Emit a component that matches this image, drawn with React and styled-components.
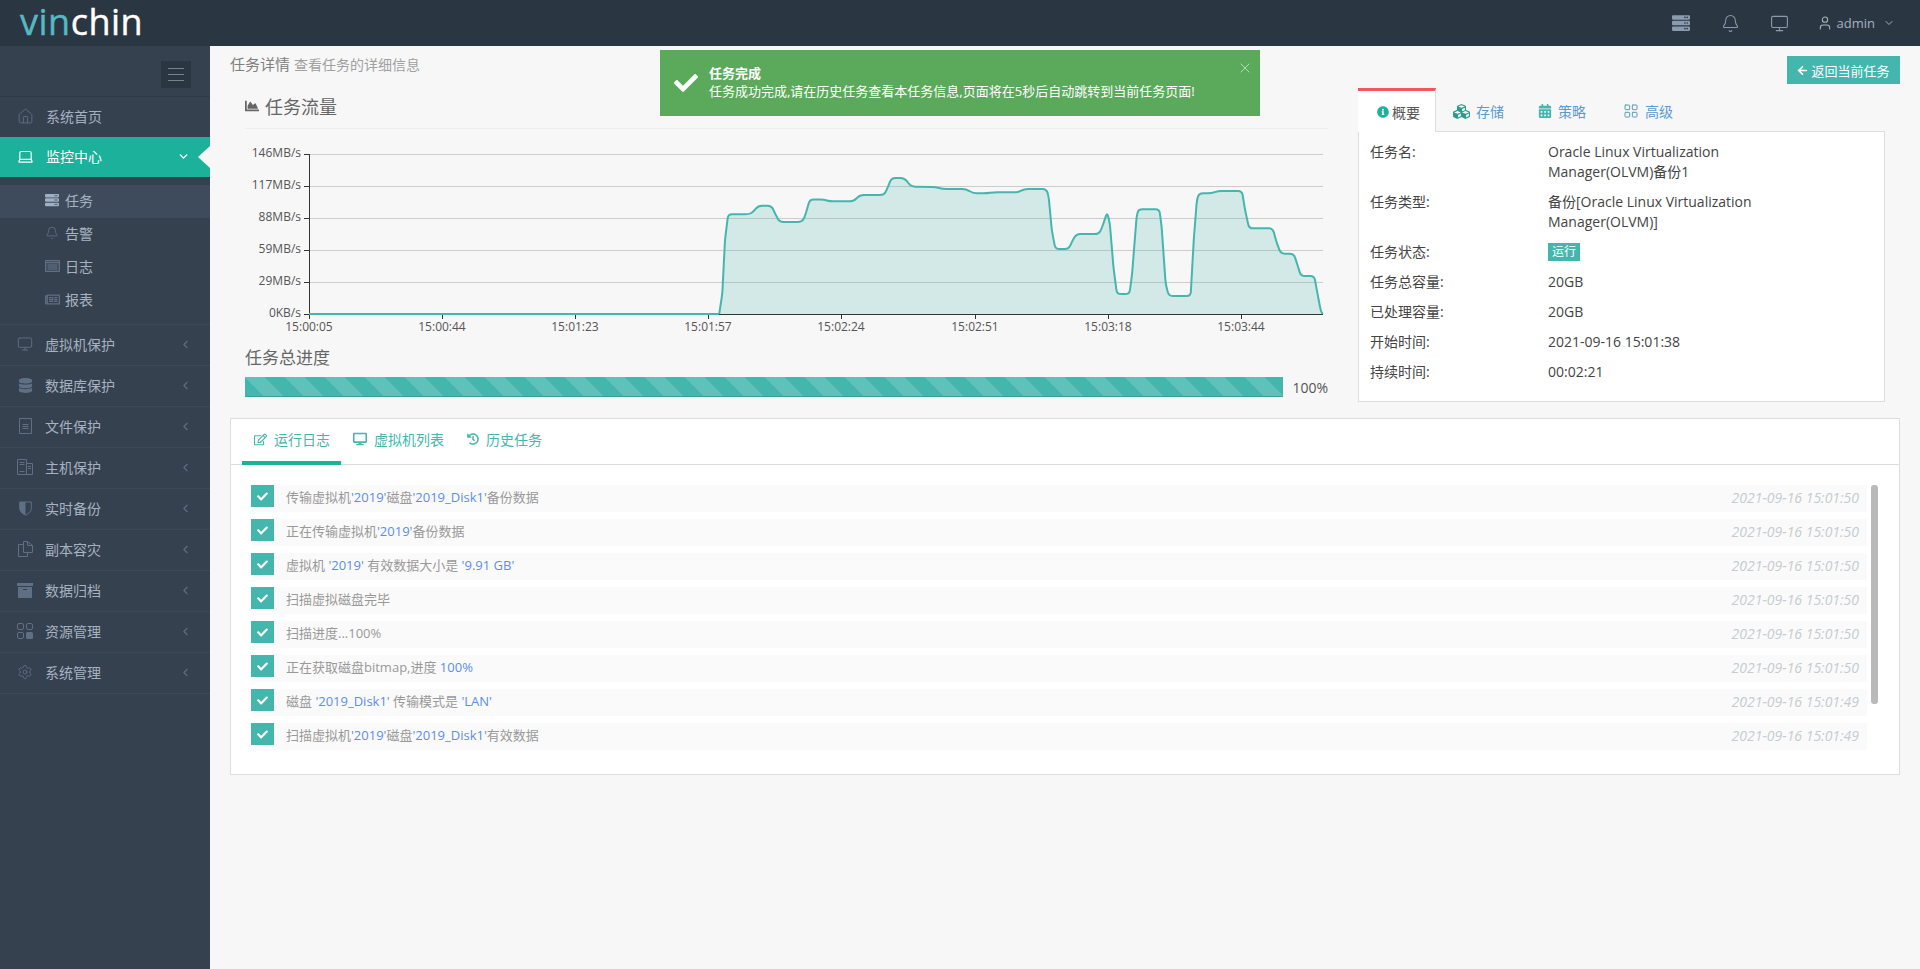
import React from 'react';
import styled, { createGlobalStyle } from 'styled-components';
import {
  FaArrowLeft,
  FaChartArea,
  FaCalendarAlt,
  FaCheck,
  FaCubes,
  FaDatabase,
  FaDesktop,
  FaHistory,
  FaInfoCircle,
  FaRegEdit,
  FaRegNewspaper,
  FaServer,
} from 'react-icons/fa';
import {
  Bell,
  ChevronDown,
  ChevronLeft,
  House,
  LayoutGrid,
  Laptop,
  Monitor,
  Settings,
  User,
  X,
} from 'lucide-react';

const GlobalStyle = createGlobalStyle`
  html, body {
    margin: 0;
    padding: 0;
    background: #f7f7f7;
    font-family: "Open Sans", "Noto Sans CJK SC", sans-serif;
    overflow: hidden;
  }
  * {
    box-sizing: border-box;
  }
`;

const Page = styled.div`
  display: flex;
  flex-direction: column;
  height: 969px;
`;

const TopBar = styled.header`
  display: flex;
  align-items: center;
  flex: 0 0 46px;
  background: #2b3643;
  padding: 0 25px 0 20px;
`;

const Logo = styled.div`
  font-family: "Open Sans", sans-serif;
  font-size: 36px;
  line-height: 46px;
  letter-spacing: 0.5px;
  color: #ffffff;
  margin-top: -3px;
  -webkit-text-stroke: 0.4px currentColor;
`;

const LogoAccent = styled.span`
  color: #55b9c4;
`;

const TopActions = styled.div`
  display: flex;
  align-items: center;
  margin-left: auto;
  color: #8a9bae;
`;

const TopIcon = styled.div`
  display: flex;
  justify-content: center;
  width: 49.5px;
`;

const UserMenu = styled.div`
  display: flex;
  align-items: center;
  margin-left: 12px;
  font-size: 13px;
  color: #a3b1c0;
`;

const UserName = styled.span`
  margin: 0 8px 0 4px;
`;

const Body = styled.div`
  display: flex;
  flex: 1;
  min-height: 0;
`;

const Sidebar = styled.aside`
  flex: 0 0 210px;
  background: #364150;
`;

const ToggleRow = styled.div`
  display: flex;
  justify-content: flex-end;
  height: 51px;
  padding: 15px 19px 0 0;
  border-bottom: 1px solid #2f3a48;
`;

const ToggleButton = styled.div`
  display: flex;
  flex-direction: column;
  justify-content: center;
  gap: 5px;
  width: 30px;
  height: 27px;
  padding: 0 7px;
  background: #2b3643;
  span {
    display: block;
    height: 1px;
    background: #75818f;
  }
`;

const NavItem = styled.div`
  position: relative;
  display: flex;
  align-items: center;
  height: ${(p) => (p.$plain ? '40px' : '41px')};
  padding: 0 17px 2px;
  font-size: 14px;
  color: ${(p) => (p.$active ? '#ffffff' : '#a7b2c0')};
  background: ${(p) => (p.$active ? '#1bb19b' : 'transparent')};
  border-bottom: ${(p) => (p.$plain ? 'none' : '1px solid #3d4957')};
  ${(p) =>
    p.$active &&
    `&::after {
      content: '';
      position: absolute;
      right: 0;
      top: 9px;
      border-top: 11px solid transparent;
      border-bottom: 11px solid transparent;
      border-right: 12px solid #f7f7f7;
    }`}
`;

const NavIcon = styled.span`
  display: flex;
  justify-content: center;
  flex: 0 0 16px;
  margin-right: 12px;
  color: ${(p) => (p.$active ? '#ffffff' : '#5f6f84')};
`;

const NavChevron = styled.span`
  display: flex;
  margin-left: auto;
  margin-right: ${(p) => (p.$active ? '3px' : '1px')};
  color: ${(p) => (p.$active ? '#ffffff' : '#5f6e80')};
`;

const SubMenu = styled.div`
  padding: 8px 0 7px;
  border-bottom: 1px solid #3d4957;
`;

const SubItem = styled.div`
  display: flex;
  align-items: center;
  height: 33px;
  padding: 0 0 3px 44px;
  font-size: 14px;
  color: #a7b2c0;
  background: ${(p) => (p.$active ? '#3e4b5c' : 'transparent')};
`;

const SubIcon = styled.span`
  display: flex;
  justify-content: center;
  flex: 0 0 16px;
  margin-right: 5px;
  color: ${(p) => (p.$active ? '#9fb0c4' : '#5f6f84')};
`;

const Main = styled.main`
  position: relative;
  flex: 1;
  padding: 0 20px;
`;

const HeaderRow = styled.div`
  display: flex;
  align-items: flex-start;
  justify-content: space-between;
  height: 42px;
  padding-top: 10px;
`;

const PageTitle = styled.div`
  font-size: 15px;
  line-height: 18px;
  color: #808080;
  margin-top: -1px;
  small {
    font-size: 14px;
    color: #a0a0a0;
  }
`;

const BackButton = styled.div`
  display: flex;
  align-items: center;
  justify-content: center;
  gap: 3px;
  width: 113px;
  height: 28px;
  font-size: 13px;
  color: #ffffff;
  background: #44b6ae;
`;

const Alert = styled.div`
  position: absolute;
  top: 4px;
  left: 450px;
  display: flex;
  align-items: center;
  width: 600px;
  height: 66px;
  padding-left: 14px;
  color: #ffffff;
  background: #5ba95b;
  font-size: 13px;
  line-height: 18px;
`;

const AlertTitle = styled.div`
  font-weight: 700;
`;

const AlertText = styled.div`
  margin: -2px 0 0 11px;
`;

const AlertClose = styled.span`
  position: absolute;
  top: 10px;
  right: 7px;
  display: flex;
  color: #cfe5cf;
`;

const UpperRow = styled.div`
  display: flex;
  justify-content: space-between;
  margin-bottom: 16px;
  padding: 0 15px;
`;

const TrafficColumn = styled.section`
  width: 1083px;
`;

const SectionTitle = styled.div`
  display: flex;
  align-items: center;
  gap: 6px;
  height: 41px;
  padding-bottom: 4px;
  font-size: 18px;
  color: #666666;
  border-bottom: 1px solid #eeeeee;
`;

const ChartSvg = styled.svg`
  display: block;
  width: 1083px;
  height: 211px;
  text {
    font-family: "Open Sans", sans-serif;
    font-size: 12px;
    fill: #555555;
  }
`;

const ProgressTitle = styled.div`
  height: 37px;
  padding-bottom: 2px;
  font-size: 17px;
  line-height: 35px;
  color: #666666;
`;

const ProgressRow = styled.div`
  display: flex;
  align-items: center;
  justify-content: space-between;
`;

const ProgressBar = styled.div`
  width: 1038px;
  height: 20px;
  background-color: #44b6ae;
  background-image: linear-gradient(
    45deg,
    rgba(255, 255, 255, 0.15) 25%,
    transparent 25%,
    transparent 50%,
    rgba(255, 255, 255, 0.15) 50%,
    rgba(255, 255, 255, 0.15) 75%,
    transparent 75%,
    transparent
  );
  background-size: 40px 40px;
  border-bottom: 1px solid #3a9f98;
`;

const ProgressValue = styled.span`
  font-size: 14px;
  color: #555555;
`;

const InfoColumn = styled.section`
  width: 527px;
`;

const TabBar = styled.div`
  display: flex;
  height: 43px;
`;

const InfoTab = styled.div`
  display: flex;
  align-items: center;
  gap: ${(p) => (p.$active ? '3px' : '6px')};
  width: ${(p) => (p.$active ? '78px' : '85px')};
  padding-left: ${(p) => (p.$active ? '19px' : '17px')};
  font-size: 14px;
  color: ${(p) => (p.$active ? '#555555' : '#5b9bd1')};
  background: ${(p) => (p.$active ? '#ffffff' : 'transparent')};
  border-top: 3px solid ${(p) => (p.$active ? '#f3565d' : 'transparent')};
  border-right: 1px solid ${(p) => (p.$active ? '#dddddd' : 'transparent')};
  margin-bottom: ${(p) => (p.$active ? '-1px' : '0')};
  position: relative;
  z-index: 1;
`;

const TabIcon = styled.span`
  display: flex;
  color: ${(p) => p.$color || '#44b6ae'};
`;

const InfoPanel = styled.div`
  height: 271px;
  padding: 10px 11px 0;
  background: #ffffff;
  border: 1px solid #dddddd;
  font-size: 14px;
  line-height: 20px;
  color: #444444;
`;

const InfoRow = styled.div`
  display: flex;
  padding: 0 0 10px;
`;

const InfoLabel = styled.div`
  flex: 0 0 178px;
`;

const InfoValue = styled.div`
  width: 240px;
`;

const StatusBadge = styled.span`
  display: block;
  width: 32px;
  height: 18px;
  margin-top: 1px;
  font-size: 12px;
  line-height: 18px;
  text-align: center;
  color: #ffffff;
  background: #44b6ae;
`;

const LogPanel = styled.section`
  background: #ffffff;
  border: 1px solid #dddddd;
`;

const LogTabs = styled.div`
  display: flex;
  height: 46px;
  padding-left: 11px;
  border-bottom: 1px solid #dddddd;
`;

const LogTab = styled.div`
  display: flex;
  align-items: center;
  gap: 7px;
  height: 46px;
  padding: 0 11px 2px 12px;
  font-size: 14px;
  color: #44b6ae;
  border-bottom: 4px solid ${(p) => (p.$active ? '#1bb19b' : 'transparent')};
`;

const LogBody = styled.div`
  position: relative;
  display: flex;
  flex-direction: column;
  gap: 7px;
  padding: 20px 32px 24px 20px;
`;

const LogRow = styled.div`
  display: flex;
  height: 27px;
  background: #fafafa;
`;

const LogCheck = styled.span`
  display: flex;
  align-items: center;
  justify-content: center;
  flex: 0 0 23px;
  height: 22px;
  color: #ffffff;
  background: #44b6ae;
`;

const LogText = styled.div`
  margin: -1px 0 0 12px;
  font-size: 13px;
  line-height: 27px;
  color: #999999;
`;

const Hi = styled.span`
  color: #5b8def;
`;

const LogTime = styled.div`
  margin: -1px 0 0 auto;
  padding-right: 8px;
  font-size: 14px;
  font-style: italic;
  line-height: 27px;
  color: #c5ccd1;
`;

const LogScroll = styled.div`
  position: absolute;
  top: 20px;
  right: 21px;
  width: 7px;
  height: 219px;
  border-radius: 3px;
  background: #b9b9b9;
`;

const ListIcon = () => (
  <svg width="15" height="12" viewBox="0 0 15 12">
    <path fill="currentColor" d="M0 0h15v12H0z" opacity="0.35" />
    <path fill="none" stroke="currentColor" d="M.5.5h14v11H.5zM1 2.5h13M3 5h9M3 7h9M3 9h9" />
  </svg>
);

const FileIcon = () => (
  <svg width="13" height="16" viewBox="0 0 13 16" fill="none" stroke="currentColor">
    <path d="M.5.5h12v15H.5zM3.5 6.5h6M3.5 8.5h6M3.5 10.5h6" />
  </svg>
);

const HostIcon = () => (
  <svg width="16" height="16" viewBox="0 0 16 16" fill="none" stroke="currentColor">
    <path d="M.5.5h9v15h-9zM9.5 4.5h6v11h-6zM2.5 3.5h5M2.5 5.5h5M2.5 12.5h5M11 7.5h3M11 9.5h3" />
  </svg>
);

const ShieldIcon = () => (
  <svg width="13" height="15" viewBox="0 0 13 15">
    <path fill="none" stroke="currentColor" d="M.7 1h11.6v6.5c0 3-2.6 5.2-5.8 6.6C3.3 12.7.7 10.5.7 7.5z" />
    <path fill="currentColor" d="M.7 1h5.8v13.1C3.3 12.7.7 10.5.7 7.5z" />
  </svg>
);

const CopyIcon = () => (
  <svg width="15" height="16" viewBox="0 0 15 16" fill="none" stroke="currentColor">
    <path d="M5.5 3.5h-5v12h9v-4M5.5 11.5V.5h4l5 4v7zM9.5.5v4h5" />
  </svg>
);

const ArchiveIcon = () => (
  <svg width="16" height="15" viewBox="0 0 16 15">
    <path fill="currentColor" d="M0 0h16v3H0zM1 4h14v11H1z" />
    <path fill="#364150" d="M6 6h4v1H6z" />
  </svg>
);

const TilesIcon = () => (
  <svg width="16" height="16" viewBox="0 0 16 16">
    <g fill="none" stroke="currentColor">
      <rect x=".5" y=".5" width="6" height="6" rx="1.5" />
      <rect x="9.5" y=".5" width="6" height="6" rx="1.5" />
      <rect x=".5" y="9.5" width="6" height="6" rx="1.5" />
    </g>
    <rect fill="currentColor" x="9" y="9" width="7" height="7" rx="1.5" />
  </svg>
);

const navItems = [
  { label: '虚拟机保护', icon: <Monitor size={16} strokeWidth={1.4} /> },
  { label: '数据库保护', icon: <FaDatabase size={15} /> },
  { label: '文件保护', icon: <FileIcon /> },
  { label: '主机保护', icon: <HostIcon /> },
  { label: '实时备份', icon: <ShieldIcon /> },
  { label: '副本容灾', icon: <CopyIcon /> },
  { label: '数据归档', icon: <ArchiveIcon /> },
  { label: '资源管理', icon: <TilesIcon /> },
  { label: '系统管理', icon: <Settings size={16} strokeWidth={1.3} /> },
];

const subItems = [
  { label: '任务', icon: <FaServer size={14} />, active: true },
  { label: '告警', icon: <Bell size={14} strokeWidth={1.5} /> },
  { label: '日志', icon: <ListIcon /> },
  { label: '报表', icon: <FaRegNewspaper size={15} /> },
];

const infoRows = [
  ['任务名:', 'Oracle Linux Virtualization Manager(OLVM)备份1'],
  ['任务类型:', '备份[Oracle Linux Virtualization Manager(OLVM)]'],
  ['任务状态:', <StatusBadge key="s">运行</StatusBadge>],
  ['任务总容量:', '20GB'],
  ['已处理容量:', '20GB'],
  ['开始时间:', '2021-09-16 15:01:38'],
  ['持续时间:', '00:02:21'],
];

const logs = [
  { time: '2021-09-16 15:01:50', text: <>传输虚拟机<Hi>'2019'</Hi>磁盘<Hi>'2019_Disk1'</Hi>备份数据</> },
  { time: '2021-09-16 15:01:50', text: <>正在传输虚拟机<Hi>'2019'</Hi>备份数据</> },
  { time: '2021-09-16 15:01:50', text: <>虚拟机 <Hi>'2019'</Hi> 有效数据大小是 <Hi>'9.91 GB'</Hi></> },
  { time: '2021-09-16 15:01:50', text: <>扫描虚拟磁盘完毕</> },
  { time: '2021-09-16 15:01:50', text: <>扫描进度...100%</> },
  { time: '2021-09-16 15:01:50', text: <>正在获取磁盘bitmap,进度 <Hi>100%</Hi></> },
  { time: '2021-09-16 15:01:49', text: <>磁盘 <Hi>'2019_Disk1'</Hi> 传输模式是 <Hi>'LAN'</Hi></> },
  { time: '2021-09-16 15:01:49', text: <>扫描虚拟机<Hi>'2019'</Hi>磁盘<Hi>'2019_Disk1'</Hi>有效数据</> },
];

// traced from the traffic curve, converted to page pixels below
const curve = [
  [155, 822], [162, 760], [168, 600], [175, 523], [222, 523], [232, 515], [242, 497], [272, 497],
  [280, 520], [290, 546], [340, 546], [347, 530], [358, 478], [390, 479], [402, 484], [456, 484],
  [470, 465], [524, 465], [530, 450], [541, 414], [570, 414], [585, 440], [640, 441], [655, 447],
  [708, 447], [724, 460], [755, 460], [770, 457], [825, 457], [838, 447], [888, 447], [893, 470],
  [900, 570], [908, 627], [938, 627], [945, 605], [955, 582], [1005, 582], [1012, 565], [1024, 517],
  [1030, 550], [1038, 680], [1046, 762], [1074, 762], [1080, 700], [1090, 530], [1094, 508],
  [1141, 508], [1146, 560], [1155, 730], [1162, 768], [1211, 768], [1218, 600], [1225, 480],
  [1230, 460], [1258, 460], [1272, 453], [1326, 453], [1333, 510], [1342, 565], [1395, 565],
  [1403, 605], [1413, 641], [1442, 641], [1448, 665], [1458, 708], [1488, 708], [1495, 760],
  [1503, 815], [1507, 822],
].map(([x, y]) => [650 + x / 2.24, 40 + y / 3]);

// rounds each corner of the traced line a little, the chart uses a smoothed line
function roundedPath(points, radius) {
  const step = (from, to) => {
    const dx = to[0] - from[0];
    const dy = to[1] - from[1];
    const len = Math.hypot(dx, dy);
    const d = Math.min(radius, len / 2);
    return [from[0] + (dx / len) * d, from[1] + (dy / len) * d];
  };
  let d = `M${points[0][0]} ${points[0][1]}`;
  for (let i = 1; i < points.length - 1; i++) {
    const a = step(points[i], points[i - 1]);
    const b = step(points[i], points[i + 1]);
    d += `L${a[0]} ${a[1]}Q${points[i][0]} ${points[i][1]} ${b[0]} ${b[1]}`;
  }
  const last = points[points.length - 1];
  return `${d}L${last[0]} ${last[1]}`;
}

const linePath = roundedPath(curve, 4);

const yTicks = [
  ['146MB/s', 154],
  ['117MB/s', 186],
  ['88MB/s', 218],
  ['59MB/s', 250],
  ['29MB/s', 282],
  ['0KB/s', 314],
];

const xTicks = [
  ['15:00:05', 309],
  ['15:00:44', 442],
  ['15:01:23', 575],
  ['15:01:57', 708],
  ['15:02:24', 841],
  ['15:02:51', 975],
  ['15:03:18', 1108],
  ['15:03:44', 1241],
];

function TrafficChart() {
  return (
    <ChartSvg viewBox="245 129 1083 211">
      {yTicks.slice(0, 5).map(([, y]) => (
        <line key={y} x1="309" x2="1323" y1={y + 0.5} y2={y + 0.5} stroke="#cccccc" />
      ))}
      <path d={`${linePath}Z`} fill="#44b6ae" fillOpacity="0.2" />
      <line x1="309.5" x2="309.5" y1="154" y2="315" stroke="#333333" />
      <line x1="309" x2="1323" y1="314.5" y2="314.5" stroke="#333333" />
      {yTicks.map(([label, y]) => (
        <g key={label}>
          <line x1="304" x2="309" y1={y + 0.5} y2={y + 0.5} stroke="#333333" />
          <text x="301" y={y + 3} textAnchor="end">{label}</text>
        </g>
      ))}
      {xTicks.map(([label, x]) => (
        <g key={label}>
          <line x1={x + 0.5} x2={x + 0.5} y1="315" y2="319" stroke="#333333" />
          <text x={x} y="331" textAnchor="middle">{label}</text>
        </g>
      ))}
      <line x1="309" x2="719" y1="314" y2="314" stroke="#44b6ae" strokeWidth="2" />
      <path d={linePath} fill="none" stroke="#44b6ae" strokeWidth="2" />
    </ChartSvg>
  );
}

export default function App() {
  return (
    <Page>
      <GlobalStyle />
      <TopBar>
        <Logo><LogoAccent>vin</LogoAccent>chin</Logo>
        <TopActions>
          <TopIcon><FaServer size={18} /></TopIcon>
          <TopIcon><Bell size={19} strokeWidth={1.3} /></TopIcon>
          <TopIcon><Monitor size={19} strokeWidth={1.4} /></TopIcon>
          <UserMenu>
            <User size={16} strokeWidth={1.6} />
            <UserName>admin</UserName>
            <ChevronDown size={12} />
          </UserMenu>
        </TopActions>
      </TopBar>
      <Body>
        <Sidebar>
          <ToggleRow>
            <ToggleButton><span /><span /><span /></ToggleButton>
          </ToggleRow>
          <NavItem $plain>
            <NavIcon><House size={17} strokeWidth={1.3} /></NavIcon>
            系统首页
          </NavItem>
          <NavItem $plain $active>
            <NavIcon $active><Laptop size={17} strokeWidth={1.6} /></NavIcon>
            监控中心
            <NavChevron $active><ChevronDown size={13} strokeWidth={2.5} /></NavChevron>
          </NavItem>
          <SubMenu>
            {subItems.map((item) => (
              <SubItem key={item.label} $active={item.active}>
                <SubIcon $active={item.active}>{item.icon}</SubIcon>
                {item.label}
              </SubItem>
            ))}
          </SubMenu>
          {navItems.map((item) => (
            <NavItem key={item.label}>
              <NavIcon>{item.icon}</NavIcon>
              {item.label}
              <NavChevron><ChevronLeft size={13} /></NavChevron>
            </NavItem>
          ))}
        </Sidebar>
        <Main>
          <HeaderRow>
            <PageTitle>任务详情 <small>查看任务的详细信息</small></PageTitle>
            <BackButton><FaArrowLeft size={11} />返回当前任务</BackButton>
          </HeaderRow>
          <Alert>
            <FaCheck size={24} />
            <AlertText>
              <AlertTitle>任务完成</AlertTitle>
              任务成功完成,请在历史任务查看本任务信息,页面将在5秒后自动跳转到当前任务页面!
            </AlertText>
            <AlertClose><X size={16} strokeWidth={1.2} /></AlertClose>
          </Alert>
          <UpperRow>
            <TrafficColumn>
              <SectionTitle><FaChartArea size={14} />任务流量</SectionTitle>
              <TrafficChart />
              <ProgressTitle>任务总进度</ProgressTitle>
              <ProgressRow>
                <ProgressBar />
                <ProgressValue>100%</ProgressValue>
              </ProgressRow>
            </TrafficColumn>
            <InfoColumn>
              <TabBar>
                <InfoTab $active>
                  <TabIcon $color="#1bb19b"><FaInfoCircle size={12} /></TabIcon>概要
                </InfoTab>
                <InfoTab><TabIcon $color="#2e9c8c"><FaCubes size={17} /></TabIcon>存储</InfoTab>
                <InfoTab><TabIcon><FaCalendarAlt size={14} /></TabIcon>策略</InfoTab>
                <InfoTab><TabIcon $color="#5a9fb8"><LayoutGrid size={16} strokeWidth={1.5} /></TabIcon>高级</InfoTab>
              </TabBar>
              <InfoPanel>
                {infoRows.map(([label, value]) => (
                  <InfoRow key={label}>
                    <InfoLabel>{label}</InfoLabel>
                    <InfoValue>{value}</InfoValue>
                  </InfoRow>
                ))}
              </InfoPanel>
            </InfoColumn>
          </UpperRow>
          <LogPanel>
            <LogTabs>
              <LogTab $active><FaRegEdit size={13} />运行日志</LogTab>
              <LogTab><FaDesktop size={14} />虚拟机列表</LogTab>
              <LogTab><FaHistory size={12} />历史任务</LogTab>
            </LogTabs>
            <LogBody>
              {logs.map((log, i) => (
                <LogRow key={i}>
                  <LogCheck><FaCheck size={11} /></LogCheck>
                  <LogText>{log.text}</LogText>
                  <LogTime>{log.time}</LogTime>
                </LogRow>
              ))}
              <LogScroll />
            </LogBody>
          </LogPanel>
        </Main>
      </Body>
    </Page>
  );
}
